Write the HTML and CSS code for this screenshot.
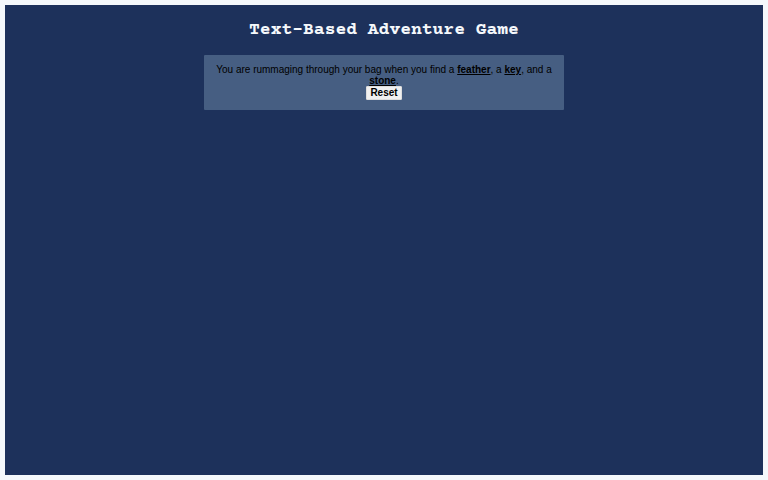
FILE: index.html
```
<!DOCTYPE html>
<html lang="en">
<head>
    <meta charset="UTF-8">
    <meta name="viewport" content="width=device-width, initial-scale=1.0">
    <title>Text-Based Adventure Game</title>
    <link rel="stylesheet" href="styles.css">
</head>
<body>
    <main class="game">
        <h1>Text-Based Adventure Game</h1>

        <div class="story">
            <p>
                You are rummaging through your bag when you find a
                <a href="#feather">feather</a>, a <a href="#key">key</a>, and a
                <a href="#stone">stone</a>.
            </p>
            <button type="button" class="reset">Reset</button>
        </div>
    </main>
</body>
</html>
```

FILE: styles.css
```
* {
    margin: 0;
    padding: 0;
    box-sizing: border-box;
}

body {
    font-family: "Liberation Sans", Arial, sans-serif;
    font-size: 10px;
    line-height: 11px;
    background: #f5f8fb;
    min-height: 100vh;
    display: flex;
    padding: 5px;
}

.game {
    flex: 1;
    display: flex;
    flex-direction: column;
    align-items: center;
    gap: 13px;
    padding: 13px 10px;
    background: #1d315b;
}

h1 {
    font-family: "Courier Prime", "Courier New", Courier, monospace;
    font-size: 18px;
    font-weight: bold;
    line-height: 24px;
    color: #f5f8fb;
}

.story {
    width: 100%;
    max-width: 360px;
    padding: 9px 10px 10px;
    border-radius: 1px;
    background: #465e82;
    color: #000;
    text-align: center;
}

.story a {
    color: #000;
    font-weight: bold;
}

.reset {
    display: block;
    margin: 0 auto;
    padding: 1px 3px;
    border: 1px solid #ddd;
    border-radius: 1px;
    background: #f0f0f0;
    color: #000;
    font: bold 10px/10px "Liberation Sans", Arial, sans-serif;
    cursor: pointer;
}
```
